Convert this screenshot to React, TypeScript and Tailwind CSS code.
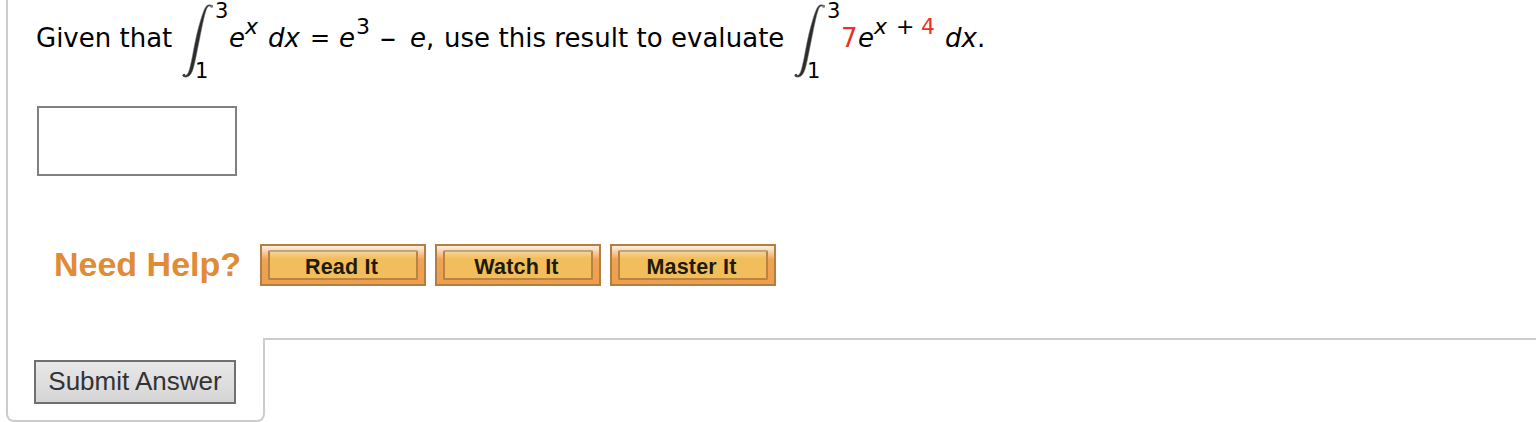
import type { ReactNode } from "react";

function Integral() {
  return (
    <div className="flex h-[84px] w-[47px] shrink-0">
      <svg className="mt-1 h-[75px] w-[33px] shrink-0" viewBox="0 0 33 75" fill="none">
        <path
          d="M30.5 1.6 C27 -.2 24.5 .8 22.8 4.5 C20.4 9.5 16.6 22 14 34 C11.5 45 10 56 7.8 64 C6.3 69.5 4.8 72.6 1.5 71.4 L1.5 72.8 C6 74.2 9.2 71.5 11.3 64.5 C13.4 57 15.2 46.5 17.4 36 C19.8 24.5 22 11.5 24.6 5 C25.8 2 27.5 1.4 30.5 2.8Z"
          fill="#2c2c2c"
          stroke="#777"
          strokeWidth=".5"
        />
        <circle cx="2" cy="71.2" r="1.5" fill="#444" />
        <circle cx="29.6" cy="2.4" r="1.4" fill="#777" />
      </svg>
      <div className="-ml-[20px] flex w-[34px] flex-col justify-between text-[21px] leading-6">
        <span className="-mt-px ml-[20px]">3</span>
        <span className="mb-px">1</span>
      </div>
    </div>
  );
}

function Base({ className, children }: { className: string; children: ReactNode }) {
  return <span className={`mt-[23px] shrink-0 leading-[30px] ${className}`}>{children}</span>;
}

function Sup({ className, children }: { className: string; children: ReactNode }) {
  return <span className={`mt-[14px] shrink-0 text-[22px] leading-[26px] ${className}`}>{children}</span>;
}

function HelpButton({ label }: { label: string }) {
  return (
    <button className="h-[42px] w-[166px] shrink-0 border-2 border-[#b27e43] bg-linear-to-b from-[#fff0df] via-[#efa454] via-35% to-[#ed9f4b] p-[4px_6px]">
      <span className="flex h-[30px] items-center justify-center rounded-[2px] border-2 border-[#b98443] border-t-[#c5a37c] bg-linear-to-b from-[#f6d397] to-[#f2bd5b] to-25% pt-[3px] pr-[3px] font-['Liberation_Sans',sans-serif] text-[21.5px] leading-6 font-bold tracking-[0.2px] whitespace-nowrap text-[#201a08]">
        {label}
      </span>
    </button>
  );
}

export default function App() {
  return (
    <main className="h-[422px] w-[1536px] overflow-hidden bg-white pl-[6px] text-black">
      <section className="flex h-[338px] flex-col border-l-2 border-[#ccc]">
        <div className="flex h-[106px] items-start pl-[28px] font-['DejaVu_Sans',sans-serif] text-[26px] whitespace-nowrap">
          <Base className="w-[146px]">Given that</Base>
          <Integral />
          <Base className="w-[16px] italic">e</Base>
          <Sup className="w-[23px] italic">x</Sup>
          <Base className="w-[42px] italic">dx</Base>
          <Base className="w-[29px] text-[24px]">=</Base>
          <Base className="w-[17px] italic">e</Base>
          <Sup className="w-[24px]">3</Sup>
          <Base className="w-[30px] text-[32px]">–</Base>
          <Base className="w-[34px]"><i>e</i>,</Base>
          <Base className="w-[350px] tracking-[0.04px]">use this result to evaluate</Base>
          <Integral />
          <Base className="w-[17px] text-[#ed3024]">7</Base>
          <Base className="w-[16px] italic">e</Base>
          <Sup className="w-[22px] italic">x</Sup>
          <Sup className="w-[25px]">+</Sup>
          <Sup className="w-[24px] text-[#ed3024]">4</Sup>
          <Base className=""><i>dx</i>.</Base>
        </div>
        <input aria-label="Answer" className="ml-[29px] h-[70px] w-[200px] shrink-0 border-2 border-[#808080] bg-white outline-none" />
        <div className="mt-[68px] flex h-[42px] items-center gap-[9px] pl-[46px]">
          <h2 className="-mt-[2px] w-[197px] shrink-0 font-['Liberation_Sans',sans-serif] text-[34px] leading-[42px] font-bold whitespace-nowrap text-[#e08b36]">
            Need Help?
          </h2>
          <HelpButton label="Read It" />
          <HelpButton label="Watch It" />
          <HelpButton label="Master It" />
        </div>
      </section>
      <footer className="flex h-[84px]">
        <div className="h-[84px] w-[259px] shrink-0 rounded-b-[8px] border-r-2 border-b-2 border-l-2 border-[#ccc] pt-[22px] pl-[26px]">
          <button className="h-[44px] w-[202px] border-2 border-[#707070] bg-linear-to-b from-[#e8e8e8] to-[#d5d5d5] pb-[2px] font-['Liberation_Sans',sans-serif] text-[26px] leading-[38px] whitespace-nowrap text-[#333]">
            Submit Answer
          </button>
        </div>
        <div className="-ml-[2px] h-[2px] flex-1 bg-[#ccc]" />
      </footer>
    </main>
  );
}
